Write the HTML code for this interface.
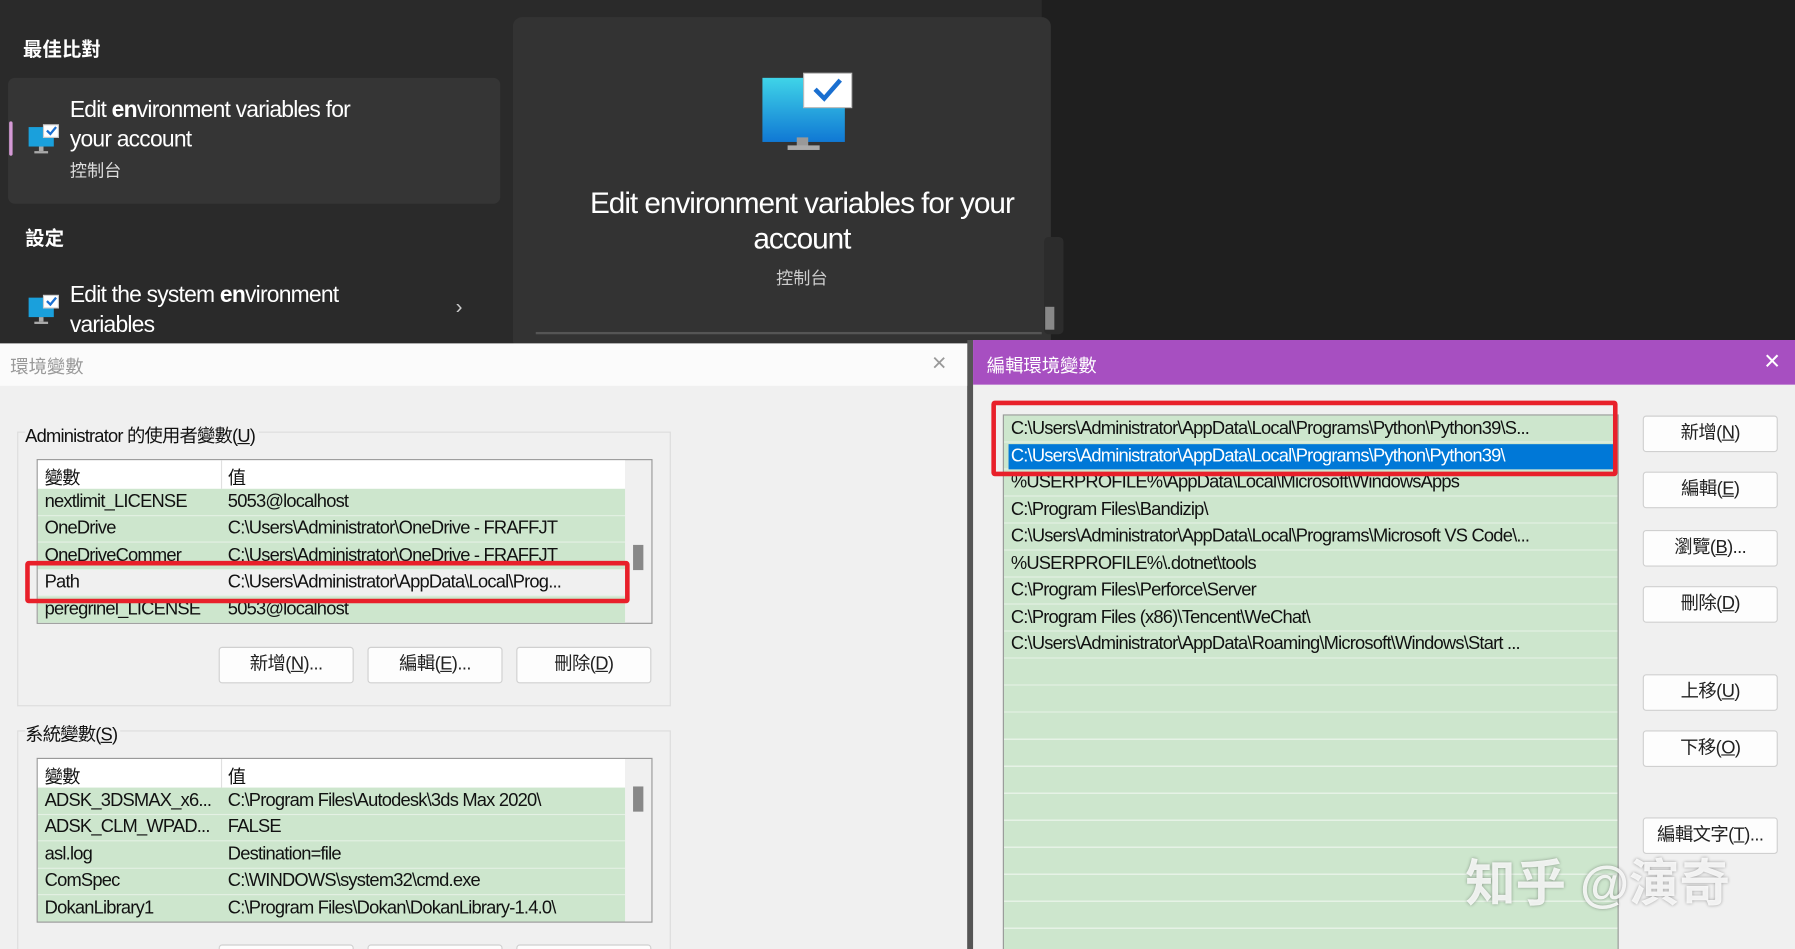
<!DOCTYPE html>
<html><head><meta charset="utf-8"><style>
*{margin:0;padding:0;box-sizing:border-box}
html,body{width:1795px;height:949px;overflow:hidden;background:#1f1f1f}
#w{position:absolute;left:0;top:0;width:1568px;height:829px;overflow:hidden;transform:scale(1.14477);transform-origin:0 0;font-family:"Liberation Sans","Noto Sans CJK TC",sans-serif;}
.a{position:absolute;white-space:nowrap}
.t{font-size:16px;letter-spacing:-0.7px;color:#111}
.row{position:absolute;left:0;right:0;height:23.5px;background:#cde6cd;border-bottom:1px solid #e4f1e4}
.btn{position:absolute;width:118px;height:32px;background:#fdfdfd;border:1px solid #d0d0d0;border-radius:3px;font-size:16px;letter-spacing:-0.5px;color:#222;text-align:center;line-height:30px}
.w{color:#fff}
</style></head><body><div id="w">
<div class="a" style="left:0;top:0;width:910px;height:300px;background:#2a2a2a"></div>
<div class="a w" style="left:20px;top:29px;font-size:17px;font-weight:bold">最佳比對</div>
<div class="a" style="left:7px;top:68px;width:430px;height:110px;background:#353535;border-radius:6px"></div>
<div class="a" style="left:8px;top:106px;width:3px;height:30px;background:#d59ad6;border-radius:2px"></div>
<svg class="a" style="left:24px;top:108px" width="30" height="28" viewBox="0 0 30 28"><rect x="1" y="3" width="22" height="17" fill="#1aa0dc"/><rect x="14" y="1" width="13" height="11" fill="#fff" stroke="#ccc"/><path d="M17 6l3 3 5-6" stroke="#1a6fd0" stroke-width="2" fill="none"/><rect x="10" y="20" width="4" height="4" fill="#aaa"/><rect x="6" y="24" width="12" height="2" fill="#aaa"/></svg>
<div class="a w" style="left:61px;top:83px;font-size:20px;letter-spacing:-0.7px;line-height:26px">Edit <b>en</b>vironment variables for<br>your account</div>
<div class="a" style="left:61px;top:138px;font-size:15px;color:#ddd">控制台</div>
<div class="a w" style="left:22px;top:194px;font-size:17px;font-weight:bold">設定</div>
<svg class="a" style="left:24px;top:257px" width="30" height="28" viewBox="0 0 30 28"><rect x="1" y="3" width="22" height="17" fill="#1aa0dc"/><rect x="14" y="1" width="13" height="11" fill="#fff" stroke="#ccc"/><path d="M17 6l3 3 5-6" stroke="#1a6fd0" stroke-width="2" fill="none"/><rect x="10" y="20" width="4" height="4" fill="#aaa"/><rect x="6" y="24" width="12" height="2" fill="#aaa"/></svg>
<div class="a w" style="left:61px;top:245px;font-size:20px;letter-spacing:-0.7px;line-height:26px">Edit the system <b>en</b>vironment<br>variables</div>
<div class="a" style="left:398px;top:258px;font-size:18px;color:#ccc">›</div>
<div class="a" style="left:448px;top:15px;width:470px;height:290px;background:#333;border-radius:8px"></div>
<svg class="a" style="left:662px;top:62px" width="84" height="72" viewBox="0 0 84 72"><defs><linearGradient id="g" x1="0" y1="0" x2="0" y2="1"><stop offset="0" stop-color="#3fd4e8"/><stop offset="1" stop-color="#1078d4"/></linearGradient></defs><rect x="4" y="6" width="72" height="56" fill="url(#g)"/><rect x="40" y="2" width="42" height="30" fill="#fff" stroke="#bbb"/><path d="M50 16l8 8 14-16" stroke="#1a6fd0" stroke-width="4" fill="none"/><rect x="34" y="58" width="10" height="8" fill="#999"/><rect x="26" y="65" width="28" height="4" fill="#aaa"/></svg>
<div class="a w" style="left:503px;top:162px;width:395px;text-align:center;font-size:26px;letter-spacing:-0.9px;line-height:31px;white-space:normal">Edit environment variables for your account</div>
<div class="a" style="left:448px;top:232px;width:505px;text-align:center;font-size:15px;color:#ccc">控制台</div>
<div class="a" style="left:468px;top:290px;width:442px;height:2px;background:#555"></div>
<div class="a" style="left:912px;top:207px;width:17px;height:85px;background:#2c2c2c;border-radius:4px"></div>
<div class="a" style="left:913px;top:268px;width:8px;height:20px;background:#888"></div>

<div class="a" style="left:0;top:300px;width:845px;height:529px;background:#f0f0f0"></div>
<div class="a" style="left:0;top:300px;width:845px;height:37px;background:#fbfbfb"></div>
<div class="a" style="left:9px;top:307px;font-size:16px;color:#999">環境變數</div>
<div class="a" style="left:814px;top:304px;font-size:22px;color:#999">×</div>
<div class="a" style="left:15px;top:377px;width:571px;height:240px;border:1px solid #dcdcdc"></div>
<div class="a t" style="left:22px;top:367px;background:#f0f0f0;padding-right:3px">Administrator 的使用者變數(<u>U</u>)</div>
<div class="a" style="left:32px;top:401px;width:538px;height:144px;border:1px solid #999;background:#f0f0f0;overflow:hidden">
 <div class="a" style="left:0;top:0;width:513px;height:25px;background:#fff"></div>
 <div class="a" style="left:160px;top:0;width:1px;height:25px;background:#e0e0e0"></div>
 <div class="a t" style="left:6px;top:2px">變數</div><div class="a t" style="left:166px;top:2px">值</div>
 <div class="a" style="left:0;top:25px;width:513px;height:119px">
  <div class="row" style="top:0"></div><div class="row" style="top:23.5px"></div><div class="row" style="top:47px"></div><div class="row" style="top:70.5px;background:#f0f0f0"></div><div class="row" style="top:94px"></div>
  <div class="a t" style="left:6px;top:3px">nextlimit_LICENSE</div><div class="a t" style="left:166px;top:3px">5053@localhost</div>
  <div class="a t" style="left:6px;top:26px">OneDrive</div><div class="a t" style="left:166px;top:26px">C:\Users\Administrator\OneDrive - FRAFFJT</div>
  <div class="a t" style="left:6px;top:50px">OneDriveCommer</div><div class="a t" style="left:166px;top:50px">C:\Users\Administrator\OneDrive - FRAFFJT</div>
  <div class="a t" style="left:6px;top:73px">Path</div><div class="a t" style="left:166px;top:73px">C:\Users\Administrator\AppData\Local\Prog...</div>
  <div class="a t" style="left:6px;top:97px">peregrinel_LICENSE</div><div class="a t" style="left:166px;top:97px">5053@localhost</div>
 </div>
 <div class="a" style="left:520px;top:74px;width:9px;height:22px;background:#888"></div>
</div>
<div class="a" style="left:22px;top:490px;width:528px;height:37px;border:4px solid #e8202a;border-radius:3px"></div>
<div class="btn" style="left:191px;top:565px">新增(<u>N</u>)...</div>
<div class="btn" style="left:321px;top:565px">編輯(<u>E</u>)...</div>
<div class="btn" style="left:451px;top:565px">刪除(<u>D</u>)</div>
<div class="a" style="left:15px;top:638px;width:571px;height:200px;border:1px solid #dcdcdc"></div>
<div class="a t" style="left:22px;top:628px;background:#f0f0f0;padding-right:3px">系統變數(<u>S</u>)</div>
<div class="a" style="left:32px;top:662px;width:538px;height:144px;border:1px solid #999;background:#f0f0f0;overflow:hidden">
 <div class="a" style="left:0;top:0;width:513px;height:25px;background:#fff"></div>
 <div class="a" style="left:160px;top:0;width:1px;height:25px;background:#e0e0e0"></div>
 <div class="a t" style="left:6px;top:2px">變數</div><div class="a t" style="left:166px;top:2px">值</div>
 <div class="a" style="left:0;top:25px;width:513px;height:119px">
  <div class="row" style="top:0"></div><div class="row" style="top:23.5px"></div><div class="row" style="top:47px"></div><div class="row" style="top:70.5px"></div><div class="row" style="top:94px"></div>
  <div class="a t" style="left:6px;top:3px">ADSK_3DSMAX_x6...</div><div class="a t" style="left:166px;top:3px">C:\Program Files\Autodesk\3ds Max 2020\</div>
  <div class="a t" style="left:6px;top:26px">ADSK_CLM_WPAD...</div><div class="a t" style="left:166px;top:26px">FALSE</div>
  <div class="a t" style="left:6px;top:50px">asl.log</div><div class="a t" style="left:166px;top:50px">Destination=file</div>
  <div class="a t" style="left:6px;top:73px">ComSpec</div><div class="a t" style="left:166px;top:73px">C:\WINDOWS\system32\cmd.exe</div>
  <div class="a t" style="left:6px;top:97px">DokanLibrary1</div><div class="a t" style="left:166px;top:97px">C:\Program Files\Dokan\DokanLibrary-1.4.0\</div>
 </div>
 <div class="a" style="left:520px;top:24px;width:9px;height:22px;background:#888"></div>
</div>
<div class="btn" style="left:191px;top:825px"></div><div class="btn" style="left:321px;top:825px"></div><div class="btn" style="left:451px;top:825px"></div>

<div class="a" style="left:845px;top:297px;width:5px;height:532px;background:#555"></div>
<div class="a" style="left:850px;top:297px;width:718px;height:532px;background:#f0f0f0"></div>
<div class="a" style="left:850px;top:297px;width:718px;height:39px;background:#a74fc1"></div>
<div class="a w" style="left:862px;top:306px;font-size:16px">編輯環境變數</div>
<div class="a w" style="left:1541px;top:302px;font-size:24px;font-weight:300">×</div>
<div class="a" style="left:876px;top:362px;width:538px;height:470px;background:#cde6cd;border:1px solid #999;overflow:hidden">
 <div style="position:absolute;left:0;right:0;top:0;bottom:0;background:repeating-linear-gradient(#cde6cd 0,#cde6cd 22.5px,#e6f2e6 22.5px,#e6f2e6 23.6px)"></div>
 <div class="a" style="left:4px;top:24.5px;width:528px;height:22px;background:#0078d7"></div>
 <div class="a t" style="left:6px;top:3px">C:\Users\Administrator\AppData\Local\Programs\Python\Python39\S...</div>
 <div class="a t" style="left:6px;top:27px;color:#fff">C:\Users\Administrator\AppData\Local\Programs\Python\Python39\</div>
 <div class="a t" style="left:6px;top:50px">%USERPROFILE%\AppData\Local\Microsoft\WindowsApps</div>
 <div class="a t" style="left:6px;top:74px">C:\Program Files\Bandizip\</div>
 <div class="a t" style="left:6px;top:97px">C:\Users\Administrator\AppData\Local\Programs\Microsoft VS Code\...</div>
 <div class="a t" style="left:6px;top:121px">%USERPROFILE%\.dotnet\tools</div>
 <div class="a t" style="left:6px;top:144px">C:\Program Files\Perforce\Server</div>
 <div class="a t" style="left:6px;top:168px">C:\Program Files (x86)\Tencent\WeChat\</div>
 <div class="a t" style="left:6px;top:191px">C:\Users\Administrator\AppData\Roaming\Microsoft\Windows\Start ...</div>
</div>
<div class="a" style="left:866px;top:350px;width:547px;height:66px;border:4px solid #e8202a;border-radius:3px"></div>
<div class="btn" style="left:1435px;top:363px">新增(<u>N</u>)</div>
<div class="btn" style="left:1435px;top:412px">編輯(<u>E</u>)</div>
<div class="btn" style="left:1435px;top:463px">瀏覽(<u>B</u>)...</div>
<div class="btn" style="left:1435px;top:512px">刪除(<u>D</u>)</div>
<div class="btn" style="left:1435px;top:589px">上移(<u>U</u>)</div>
<div class="btn" style="left:1435px;top:638px">下移(<u>O</u>)</div>
<div class="btn" style="left:1435px;top:714px">編輯文字(<u>T</u>)...</div>
<div class="a" style="left:1280px;top:736px;font-size:44px;font-weight:bold;color:rgba(255,255,255,0.85);text-shadow:0 0 3px rgba(0,0,0,0.35)">知乎 @演奇</div>
</div></body></html>
